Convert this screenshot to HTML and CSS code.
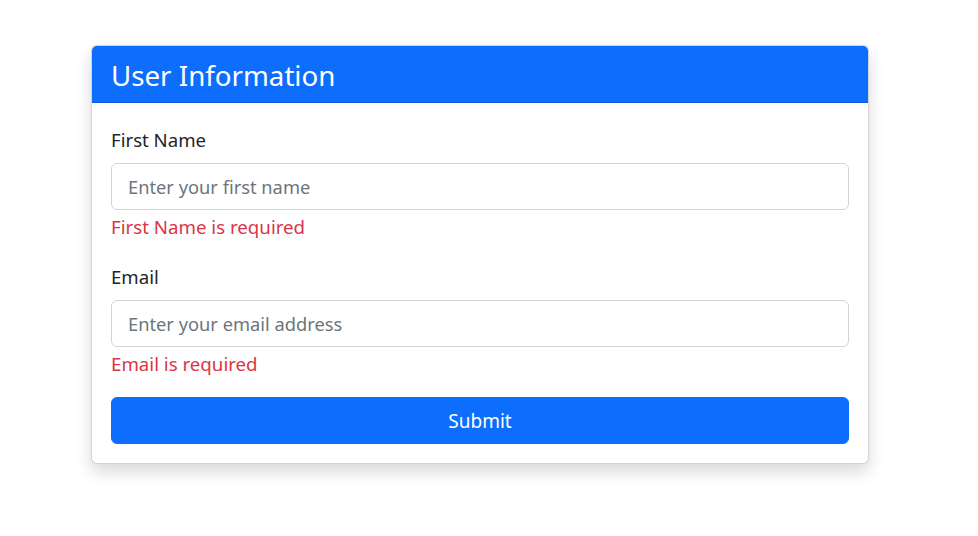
FILE: index.html
```html
<!DOCTYPE html>
<html lang="en">
<head>
<meta charset="utf-8">
<title>User Information</title>
<link rel="stylesheet" href="styles.css">
</head>
<body>
<div class="card">
  <div class="card-header">
    <h3 class="card-title">User Information</h3>
  </div>
  <form class="card-body">
    <div class="field">
      <label class="form-label" for="firstName">First Name</label>
      <input class="form-control" id="firstName" type="text" placeholder="Enter your first name">
      <div class="invalid-feedback">First Name is required</div>
    </div>
    <div class="field">
      <label class="form-label" for="email">Email</label>
      <input class="form-control" id="email" type="email" placeholder="Enter your email address">
      <div class="invalid-feedback">Email is required</div>
    </div>
    <button class="btn-submit" type="button">Submit</button>
  </form>
</div>
</body>
</html>
```
FILE: styles.css
```css
html, body {
  margin: 0;
  padding: 0;
  background: #ffffff;
}
body {
  font-family: "Noto Sans", "Open Sans", sans-serif;
  color: #212529;
  padding: 45px 0 0 91px;
  min-height: 100vh;
  box-sizing: border-box;
}
.card {
  width: 778px;
  box-sizing: border-box;
  border: 1px solid rgba(0, 0, 0, 0.175);
  border-radius: 6px;
  background: #fff;
  box-shadow: 0 8px 16px rgba(0, 0, 0, 0.15);
  overflow: hidden;
}
.card-header {
  background: #0d6efd;
  color: #fff;
  height: 57px;
  box-sizing: border-box;
  padding: 3px 19px 0;
  border-bottom: 1px solid rgba(0, 0, 0, 0.175);
  display: flex;
  align-items: center;
}
.card-title {
  margin: 0;
  font-weight: 400;
  font-size: 27.7px;
  line-height: 1.2;
}
.card-body {
  padding: 20px 19px 19px;
  display: flex;
  flex-direction: column;
}
.field {
  display: flex;
  flex-direction: column;
  margin-bottom: 20px;
}
.form-label {
  font-size: 18.6px;
  line-height: 27px;
  padding-top: 3px;
  margin-bottom: 10px;
}
.form-control {
  height: 47px;
  box-sizing: border-box;
  border: 1px solid #ced4da;
  border-radius: 6px;
  padding: 0 16px;
  font-family: inherit;
  font-size: 18.3px;
  color: #212529;
  outline: none;
}
.form-control::placeholder {
  color: #6c757d;
}
.invalid-feedback {
  color: #dc3545;
  font-size: 18.7px;
  line-height: 27px;
  margin-top: 3px;
}
.btn-submit {
  height: 47px;
  border: 1px solid #0d6efd;
  border-radius: 6px;
  background: #0d6efd;
  color: #fff;
  font-family: inherit;
  font-size: 19px;
  cursor: pointer;
}
```
